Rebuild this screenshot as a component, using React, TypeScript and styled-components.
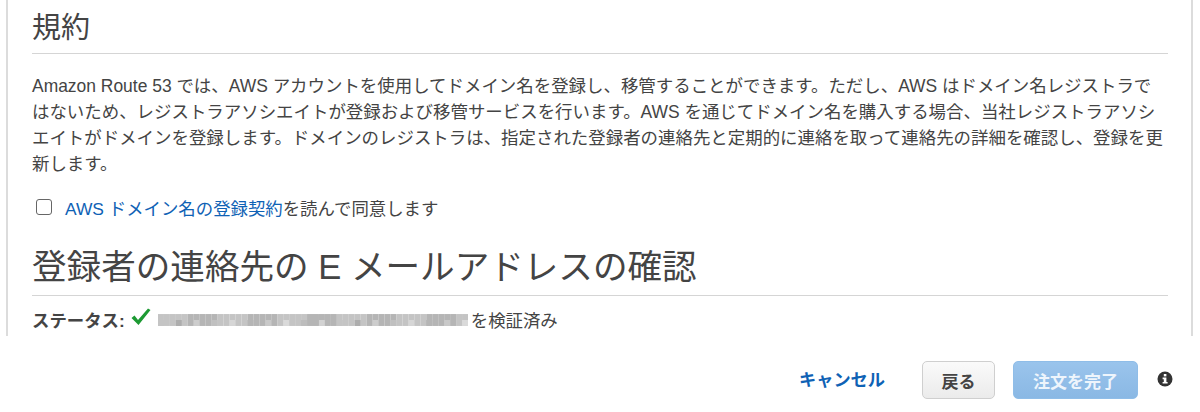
import React from "react";
import styled, { createGlobalStyle } from "styled-components";

const Global = createGlobalStyle`
  html, body { margin: 0; padding: 0; background: #fff; }
  body { font-family: "Liberation Sans", "Noto Sans CJK JP", sans-serif; color: #444; overflow: hidden; }
`;
const Page = styled.div`
  width: 1200px; height: 412px; display: flex; flex-direction: column; box-sizing: border-box;
`;
const Panel = styled.main`
  height: 336px; margin: 0 7px 0 6px; border-left: 2px solid #dcdcdc; border-right: 2px solid #dcdcdc;
  padding: 0 23px 0 24px; box-sizing: border-box; overflow: hidden;
`;
const Heading = styled.h2`
  margin: 0; font-weight: 400; font-size: 29px; line-height: 40px; color: #444; border-bottom: 1px solid #d5d5d5;
  height: 54px; box-sizing: border-box; padding-top: 8px; white-space: nowrap;
`;
const SecondHeading = styled(Heading)`
  font-size: 34.6px; height: 50px; padding-top: 1px; margin-top: 26px;
`;
const Para = styled.p`
  margin: 19px 0 0; font-size: 17.46px; line-height: 26px; color: #444; width: 1136px;
`;
const Line = styled.span`
  display: block; white-space: nowrap;
`;
const Agree = styled.label`
  display: flex; align-items: center; height: 26px; margin-top: 17px; font-size: 17.4px; padding-left: 4px;
`;
const Box = styled.span`
  width: 14px; height: 14px; border: 1px solid #666; border-radius: 3px; margin-right: 13px; background: #fff; flex: none;
`;
const A = styled.a`
  color: #0f62b5; text-decoration: none;
`;
const Status = styled.div`
  display: flex; align-items: center; height: 26px; margin-top: 10px; font-size: 17.4px;
`;
const StatusLabel = styled.strong`
  font-weight: 700; margin-right: 5px;
`;
const Mosaic = styled.svg`
  margin: 2px 3px 0 6px; flex: none;
`;
const Footer = styled.footer`
  flex: 1; display: flex; align-items: flex-start; padding: 25px 27px 0 0; justify-content: flex-end;
`;
const Cancel = styled.a`
  color: #0f62b5; font-weight: 700; font-size: 17.2px; line-height: 38px; margin-right: 37px;
`;
const Button = styled.button<{ $primary?: boolean }>`
  height: 38px; border-radius: 5px; font: 700 17px "Liberation Sans", "Noto Sans CJK JP", sans-serif; padding: 0;
  border: 1px solid ${(p) => (p.$primary ? "#8fbde8" : "#cfcfcf")};
  background: ${(p) => (p.$primary ? "linear-gradient(#9ac4ec,#8ab8e4)" : "linear-gradient(#fafafa,#ebebeb)")};
  color: ${(p) => (p.$primary ? "#eef5fc" : "#444")};
  width: ${(p) => (p.$primary ? "125px" : "73px")};
  margin-right: ${(p) => (p.$primary ? "19px" : "18px")};
`;
const Info = styled.svg`
  margin-top: 10px; flex: none;
`;
const Check = styled.svg`
  margin-top: -4px; flex: none;
`;

const shades = ["#c4c4c4","#d2d2d2","#bdbdbd","#dadada","#c9c9c9","#b5b5b5","#d6d6d6","#c0c0c0","#cdcdcd","#adadad"];

export default function App() {
  const cells = [];
  for (let i = 0; i < 52; i++) {
    cells.push(<rect key={i} x={i * 6} y={3} width={6} height={12} fill={shades[(i * 7 + (i % 5) * 3) % 10]} />);
    if (i % 3 === 0) cells.push(<rect key={"b" + i} x={i * 6} y={9} width={6} height={6} fill={shades[(i * 3) % 10]} />);
  }
  return (
    <Page>
      <Global />
      <Panel>
        <Heading>規約</Heading>
        <Para>
          <Line>Amazon Route 53 では、AWS アカウントを使用してドメイン名を登録し、移管することができます。ただし、AWS はドメイン名レジストラで</Line>
          <Line>はないため、レジストラアソシエイトが登録および移管サービスを行います。AWS を通じてドメイン名を購入する場合、当社レジストラアソシ</Line>
          <Line>エイトがドメインを登録します。ドメインのレジストラは、指定された登録者の連絡先と定期的に連絡を取って連絡先の詳細を確認し、登録を更</Line>
          <Line>新します。</Line>
        </Para>
        <Agree>
          <Box />
          <span><A>AWS ドメイン名の登録契約</A>を読んで同意します</span>
        </Agree>
        <SecondHeading>登録者の連絡先の E メールアドレスの確認</SecondHeading>
        <Status>
          <StatusLabel>ステータス:</StatusLabel>
          <Check width="22" height="20" viewBox="0 0 22 20">
            <path d="M1.5 11 L4.5 8.5 L8 13 L18 1.5 L20.5 3 L8.5 18 Z" fill="#1d9a33" />
          </Check>
          <Mosaic width="310" height="18" viewBox="0 0 312 18">{cells}</Mosaic>
          <span>を検証済み</span>
        </Status>
      </Panel>
      <Footer>
        <Cancel>キャンセル</Cancel>
        <Button>戻る</Button>
        <Button $primary>注文を完了</Button>
        <Info width="16" height="16" viewBox="0 0 16 16">
          <circle cx="8" cy="8" r="7.5" fill="#333" />
          <rect x="6.8" y="3" width="2.6" height="2.4" fill="#fff" />
          <path d="M5.6 6.6 H9.4 V11 H10.6 V12.6 H5.6 V11 H6.8 V8.2 H5.6 Z" fill="#fff" />
        </Info>
      </Footer>
    </Page>
  );
}
